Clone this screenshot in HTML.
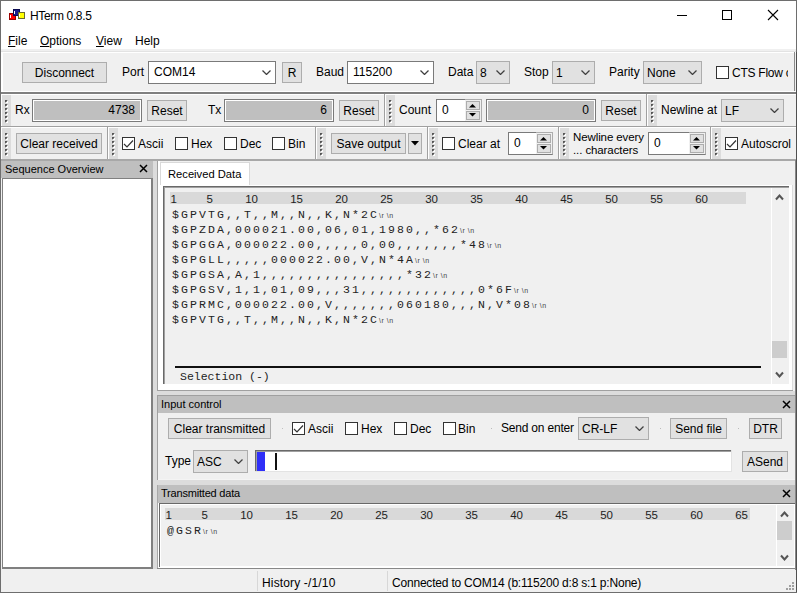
<!DOCTYPE html><html><head><meta charset="utf-8"><style>*{margin:0;padding:0;box-sizing:border-box}
html,body{width:797px;height:593px;overflow:hidden;background:#f0f0f0}
body{position:relative;font-family:"Liberation Sans",sans-serif;font-size:12px;color:#000}
.a{position:absolute}
.t{position:absolute;white-space:nowrap;line-height:14px}
.btn{position:absolute;background:#e1e1e1;border:1px solid #adadad;text-align:center;white-space:nowrap}
.cmb{position:absolute;background:#e1e1e1;border:1px solid #adadad;white-space:nowrap}
.ecmb{position:absolute;background:#fff;border:1px solid #7a7a7a;white-space:nowrap}
.fld{position:absolute;background:#bfbfbf;border:1px solid #7a7a7a;box-shadow:inset 0 0 0 1px #fff;text-align:right;white-space:nowrap}
.chk{position:absolute;width:13px;height:13px;border:1px solid #333;background:#fff}
.hdr{position:absolute;background:#bfbfbf}
.mono{position:absolute;white-space:pre;font-family:"Liberation Mono",monospace;font-size:11.5px;letter-spacing:2.1px;color:#222}
.rn{font-family:"Liberation Sans",sans-serif;font-size:7px;letter-spacing:0.5px;color:#444}
</style></head><body>
<div class="a" style="left:0px;top:0px;width:797px;height:593px;background:transparent;border:1px solid #6e6e6e"></div>
<div class="a" style="left:1px;top:1px;width:795px;height:49px;background:#fff;"></div>
<svg class="a" style="left:0px;top:0px" width="30" height="24" shape-rendering="crispEdges">
<rect x="9" y="13" width="7" height="7" fill="#9a0000"/><rect x="10" y="14" width="5" height="5" fill="#f00"/><rect x="10" y="15" width="1" height="3" fill="#fff"/>
<rect x="13" y="9" width="7" height="7" fill="#0a0a50"/><rect x="14" y="10" width="5" height="5" fill="#1c1c8a"/><rect x="14" y="11" width="1" height="3" fill="#fff"/>
<rect x="18" y="12" width="7" height="7" fill="#6a6a30"/><rect x="19" y="13" width="5" height="5" fill="#ff0"/><rect x="19" y="14" width="1" height="3" fill="#fff"/>
</svg>
<div class="t" style="left:30px;top:9px;letter-spacing:-0.35px">HTerm 0.8.5</div>
<div class="a" style="left:677px;top:15px;width:10px;height:1px;background:#000;"></div>
<div class="a" style="left:722px;top:10px;width:10px;height:10px;border:1px solid #000"></div>
<svg class="a" style="left:767px;top:9px" width="12" height="12" viewBox="0 0 12 12"><path d="M1 1L11 11M11 1L1 11" stroke="#000" stroke-width="1.1"/></svg>
<div class="t" style="left:8px;top:34px;"><u>F</u>ile</div>
<div class="t" style="left:40px;top:34px;"><u>O</u>ptions</div>
<div class="t" style="left:96px;top:34px;"><u>V</u>iew</div>
<div class="t" style="left:135px;top:34px;">Help</div>
<div class="a" style="left:1px;top:49px;width:795px;height:2px;background:#f0f0f0;"></div>
<div class="a" style="left:1px;top:51px;width:795px;height:1px;background:#e3e3e3;"></div>
<div class="a" style="left:1px;top:52px;width:795px;height:1px;background:#fff;"></div>
<div class="a" style="left:1px;top:52px;width:2px;height:39px;background:#fff;"></div>
<div class="btn" style="left:22px;top:62px;width:85px;height:21px;line-height:20px">Disconnect</div>
<div class="t" style="left:122px;top:65px;">Port</div>
<div class="ecmb" style="left:148px;top:61px;width:128px;height:23px;padding-left:5px;line-height:21px">COM14</div>
<svg class="a" style="left:262px;top:70px" width="9" height="5" viewBox="0 0 9 5"><path d="M0.5 0.5L4.5 4.5L8.5 0.5" stroke="#404040" stroke-width="1.25" fill="none"/></svg>
<div class="btn" style="left:282px;top:62px;width:20px;height:21px;line-height:20px">R</div>
<div class="t" style="left:316px;top:65px;">Baud</div>
<div class="ecmb" style="left:347px;top:61px;width:87px;height:23px;padding-left:5px;line-height:21px">115200</div>
<svg class="a" style="left:420px;top:70px" width="9" height="5" viewBox="0 0 9 5"><path d="M0.5 0.5L4.5 4.5L8.5 0.5" stroke="#404040" stroke-width="1.25" fill="none"/></svg>
<div class="t" style="left:448px;top:65px;">Data</div>
<div class="cmb" style="left:476px;top:61px;width:34px;height:23px;padding-left:3px;line-height:22px">8</div>
<svg class="a" style="left:496px;top:70px" width="9" height="5" viewBox="0 0 9 5"><path d="M0.5 0.5L4.5 4.5L8.5 0.5" stroke="#404040" stroke-width="1.25" fill="none"/></svg>
<div class="t" style="left:524px;top:65px;">Stop</div>
<div class="cmb" style="left:552px;top:61px;width:43px;height:23px;padding-left:3px;line-height:22px">1</div>
<svg class="a" style="left:581px;top:70px" width="9" height="5" viewBox="0 0 9 5"><path d="M0.5 0.5L4.5 4.5L8.5 0.5" stroke="#404040" stroke-width="1.25" fill="none"/></svg>
<div class="t" style="left:609px;top:65px;">Parity</div>
<div class="cmb" style="left:643px;top:61px;width:59px;height:23px;padding-left:3px;line-height:22px">None</div>
<svg class="a" style="left:688px;top:70px" width="9" height="5" viewBox="0 0 9 5"><path d="M0.5 0.5L4.5 4.5L8.5 0.5" stroke="#404040" stroke-width="1.25" fill="none"/></svg>
<div class="chk" style="left:716px;top:66px"></div>
<div class="a" style="left:732px;top:66px;width:56px;overflow:hidden;white-space:nowrap;line-height:14px;letter-spacing:-0.25px">CTS Flow c</div>
<div class="a" style="left:794px;top:52px;width:1px;height:40px;background:#8a8a8a;"></div>
<div class="a" style="left:1px;top:91px;width:795px;height:1px;background:#fff;"></div>
<div class="a" style="left:1px;top:92px;width:795px;height:2px;background:#808080;"></div>
<div class="a" style="left:1px;top:94px;width:795px;height:1px;background:#fff;"></div>
<div class="a" style="left:2px;top:95px;width:9px;height:31px;background:#dcdcdc"></div>
<svg class="a" style="left:0px;top:95px" width="12" height="31"><rect x="5" y="5" width="2" height="2" fill="#555"/><rect x="6" y="6" width="1" height="1" fill="#888"/><rect x="7" y="5" width="1" height="1" fill="#bbb"/><rect x="5" y="7" width="1" height="1" fill="#bbb"/><rect x="7" y="6" width="1" height="2" fill="#fff"/><rect x="6" y="7" width="1" height="1" fill="#fff"/><rect x="5" y="9" width="2" height="2" fill="#555"/><rect x="6" y="10" width="1" height="1" fill="#888"/><rect x="7" y="9" width="1" height="1" fill="#bbb"/><rect x="5" y="11" width="1" height="1" fill="#bbb"/><rect x="7" y="10" width="1" height="2" fill="#fff"/><rect x="6" y="11" width="1" height="1" fill="#fff"/><rect x="5" y="13" width="2" height="2" fill="#555"/><rect x="6" y="14" width="1" height="1" fill="#888"/><rect x="7" y="13" width="1" height="1" fill="#bbb"/><rect x="5" y="15" width="1" height="1" fill="#bbb"/><rect x="7" y="14" width="1" height="2" fill="#fff"/><rect x="6" y="15" width="1" height="1" fill="#fff"/><rect x="5" y="17" width="2" height="2" fill="#555"/><rect x="6" y="18" width="1" height="1" fill="#888"/><rect x="7" y="17" width="1" height="1" fill="#bbb"/><rect x="5" y="19" width="1" height="1" fill="#bbb"/><rect x="7" y="18" width="1" height="2" fill="#fff"/><rect x="6" y="19" width="1" height="1" fill="#fff"/><rect x="5" y="21" width="2" height="2" fill="#555"/><rect x="6" y="22" width="1" height="1" fill="#888"/><rect x="7" y="21" width="1" height="1" fill="#bbb"/><rect x="5" y="23" width="1" height="1" fill="#bbb"/><rect x="7" y="22" width="1" height="2" fill="#fff"/><rect x="6" y="23" width="1" height="1" fill="#fff"/><rect x="5" y="25" width="2" height="2" fill="#555"/><rect x="6" y="26" width="1" height="1" fill="#888"/><rect x="7" y="25" width="1" height="1" fill="#bbb"/><rect x="5" y="27" width="1" height="1" fill="#bbb"/><rect x="7" y="26" width="1" height="2" fill="#fff"/><rect x="6" y="27" width="1" height="1" fill="#fff"/></svg>
<div class="t" style="left:15px;top:103px;">Rx</div>
<div class="fld" style="left:32px;top:99px;width:110px;height:23px;padding-right:6px;line-height:21px">4738</div>
<div class="btn" style="left:147px;top:100px;width:40px;height:21px;line-height:20px">Reset</div>
<div class="t" style="left:208px;top:103px;">Tx</div>
<div class="fld" style="left:224px;top:99px;width:110px;height:23px;padding-right:6px;line-height:21px">6</div>
<div class="btn" style="left:339px;top:100px;width:40px;height:21px;line-height:20px">Reset</div>
<div class="a" style="left:384px;top:94px;width:1px;height:32px;background:#a0a0a0;"></div>
<div class="a" style="left:385px;top:94px;width:1px;height:32px;background:#fff;"></div>
<div class="a" style="left:386px;top:95px;width:9px;height:31px;background:#dcdcdc"></div>
<svg class="a" style="left:384px;top:95px" width="12" height="31"><rect x="5" y="5" width="2" height="2" fill="#555"/><rect x="6" y="6" width="1" height="1" fill="#888"/><rect x="7" y="5" width="1" height="1" fill="#bbb"/><rect x="5" y="7" width="1" height="1" fill="#bbb"/><rect x="7" y="6" width="1" height="2" fill="#fff"/><rect x="6" y="7" width="1" height="1" fill="#fff"/><rect x="5" y="9" width="2" height="2" fill="#555"/><rect x="6" y="10" width="1" height="1" fill="#888"/><rect x="7" y="9" width="1" height="1" fill="#bbb"/><rect x="5" y="11" width="1" height="1" fill="#bbb"/><rect x="7" y="10" width="1" height="2" fill="#fff"/><rect x="6" y="11" width="1" height="1" fill="#fff"/><rect x="5" y="13" width="2" height="2" fill="#555"/><rect x="6" y="14" width="1" height="1" fill="#888"/><rect x="7" y="13" width="1" height="1" fill="#bbb"/><rect x="5" y="15" width="1" height="1" fill="#bbb"/><rect x="7" y="14" width="1" height="2" fill="#fff"/><rect x="6" y="15" width="1" height="1" fill="#fff"/><rect x="5" y="17" width="2" height="2" fill="#555"/><rect x="6" y="18" width="1" height="1" fill="#888"/><rect x="7" y="17" width="1" height="1" fill="#bbb"/><rect x="5" y="19" width="1" height="1" fill="#bbb"/><rect x="7" y="18" width="1" height="2" fill="#fff"/><rect x="6" y="19" width="1" height="1" fill="#fff"/><rect x="5" y="21" width="2" height="2" fill="#555"/><rect x="6" y="22" width="1" height="1" fill="#888"/><rect x="7" y="21" width="1" height="1" fill="#bbb"/><rect x="5" y="23" width="1" height="1" fill="#bbb"/><rect x="7" y="22" width="1" height="2" fill="#fff"/><rect x="6" y="23" width="1" height="1" fill="#fff"/><rect x="5" y="25" width="2" height="2" fill="#555"/><rect x="6" y="26" width="1" height="1" fill="#888"/><rect x="7" y="25" width="1" height="1" fill="#bbb"/><rect x="5" y="27" width="1" height="1" fill="#bbb"/><rect x="7" y="26" width="1" height="2" fill="#fff"/><rect x="6" y="27" width="1" height="1" fill="#fff"/></svg>
<div class="t" style="left:399px;top:103px;">Count</div>
<div class="a" style="left:436px;top:99px;width:46px;height:23px;background:#fff;border:1px solid #7a7a7a;border-right-color:#adadad"></div>
<div class="t" style="left:442px;top:103px;">0</div>
<div class="a" style="left:465px;top:100px;width:16px;height:21px;background:#f0f0f0;"></div>
<div class="a" style="left:465px;top:99px;width:17px;height:1px;background:#adadad;"></div>
<div class="a" style="left:466px;top:101px;width:14px;height:9px;background:#e1e1e1;border:1px solid #adadad"></div>
<div class="a" style="left:466px;top:111px;width:14px;height:9px;background:#e1e1e1;border:1px solid #adadad"></div>
<svg class="a" style="left:469px;top:104px" width="7" height="4"><path d="M0 3.5L3.5 0L7 3.5Z" fill="#000"/></svg>
<svg class="a" style="left:469px;top:113px" width="7" height="4"><path d="M0 0L3.5 3.5L7 0Z" fill="#000"/></svg>
<div class="fld" style="left:486px;top:99px;width:110px;height:23px;padding-right:6px;line-height:21px">0</div>
<div class="btn" style="left:601px;top:100px;width:40px;height:21px;line-height:20px">Reset</div>
<div class="a" style="left:646px;top:94px;width:1px;height:32px;background:#a0a0a0;"></div>
<div class="a" style="left:647px;top:94px;width:1px;height:32px;background:#fff;"></div>
<div class="a" style="left:648px;top:95px;width:9px;height:31px;background:#dcdcdc"></div>
<svg class="a" style="left:646px;top:95px" width="12" height="31"><rect x="5" y="5" width="2" height="2" fill="#555"/><rect x="6" y="6" width="1" height="1" fill="#888"/><rect x="7" y="5" width="1" height="1" fill="#bbb"/><rect x="5" y="7" width="1" height="1" fill="#bbb"/><rect x="7" y="6" width="1" height="2" fill="#fff"/><rect x="6" y="7" width="1" height="1" fill="#fff"/><rect x="5" y="9" width="2" height="2" fill="#555"/><rect x="6" y="10" width="1" height="1" fill="#888"/><rect x="7" y="9" width="1" height="1" fill="#bbb"/><rect x="5" y="11" width="1" height="1" fill="#bbb"/><rect x="7" y="10" width="1" height="2" fill="#fff"/><rect x="6" y="11" width="1" height="1" fill="#fff"/><rect x="5" y="13" width="2" height="2" fill="#555"/><rect x="6" y="14" width="1" height="1" fill="#888"/><rect x="7" y="13" width="1" height="1" fill="#bbb"/><rect x="5" y="15" width="1" height="1" fill="#bbb"/><rect x="7" y="14" width="1" height="2" fill="#fff"/><rect x="6" y="15" width="1" height="1" fill="#fff"/><rect x="5" y="17" width="2" height="2" fill="#555"/><rect x="6" y="18" width="1" height="1" fill="#888"/><rect x="7" y="17" width="1" height="1" fill="#bbb"/><rect x="5" y="19" width="1" height="1" fill="#bbb"/><rect x="7" y="18" width="1" height="2" fill="#fff"/><rect x="6" y="19" width="1" height="1" fill="#fff"/><rect x="5" y="21" width="2" height="2" fill="#555"/><rect x="6" y="22" width="1" height="1" fill="#888"/><rect x="7" y="21" width="1" height="1" fill="#bbb"/><rect x="5" y="23" width="1" height="1" fill="#bbb"/><rect x="7" y="22" width="1" height="2" fill="#fff"/><rect x="6" y="23" width="1" height="1" fill="#fff"/><rect x="5" y="25" width="2" height="2" fill="#555"/><rect x="6" y="26" width="1" height="1" fill="#888"/><rect x="7" y="25" width="1" height="1" fill="#bbb"/><rect x="5" y="27" width="1" height="1" fill="#bbb"/><rect x="7" y="26" width="1" height="2" fill="#fff"/><rect x="6" y="27" width="1" height="1" fill="#fff"/></svg>
<div class="t" style="left:661px;top:103px;">Newline at</div>
<div class="cmb" style="left:721px;top:99px;width:63px;height:23px;padding-left:3px;line-height:22px">LF</div>
<svg class="a" style="left:770px;top:108px" width="9" height="5" viewBox="0 0 9 5"><path d="M0.5 0.5L4.5 4.5L8.5 0.5" stroke="#404040" stroke-width="1.25" fill="none"/></svg>
<div class="a" style="left:1px;top:126px;width:795px;height:1px;background:#a0a0a0;"></div>
<div class="a" style="left:1px;top:127px;width:795px;height:1px;background:#fff;"></div>
<div class="a" style="left:1px;top:95px;width:1px;height:31px;background:#fff;"></div>
<div class="a" style="left:1px;top:128px;width:1px;height:31px;background:#fff;"></div>
<div class="a" style="left:2px;top:128px;width:9px;height:31px;background:#dcdcdc"></div>
<svg class="a" style="left:0px;top:128px" width="12" height="31"><rect x="5" y="5" width="2" height="2" fill="#555"/><rect x="6" y="6" width="1" height="1" fill="#888"/><rect x="7" y="5" width="1" height="1" fill="#bbb"/><rect x="5" y="7" width="1" height="1" fill="#bbb"/><rect x="7" y="6" width="1" height="2" fill="#fff"/><rect x="6" y="7" width="1" height="1" fill="#fff"/><rect x="5" y="9" width="2" height="2" fill="#555"/><rect x="6" y="10" width="1" height="1" fill="#888"/><rect x="7" y="9" width="1" height="1" fill="#bbb"/><rect x="5" y="11" width="1" height="1" fill="#bbb"/><rect x="7" y="10" width="1" height="2" fill="#fff"/><rect x="6" y="11" width="1" height="1" fill="#fff"/><rect x="5" y="13" width="2" height="2" fill="#555"/><rect x="6" y="14" width="1" height="1" fill="#888"/><rect x="7" y="13" width="1" height="1" fill="#bbb"/><rect x="5" y="15" width="1" height="1" fill="#bbb"/><rect x="7" y="14" width="1" height="2" fill="#fff"/><rect x="6" y="15" width="1" height="1" fill="#fff"/><rect x="5" y="17" width="2" height="2" fill="#555"/><rect x="6" y="18" width="1" height="1" fill="#888"/><rect x="7" y="17" width="1" height="1" fill="#bbb"/><rect x="5" y="19" width="1" height="1" fill="#bbb"/><rect x="7" y="18" width="1" height="2" fill="#fff"/><rect x="6" y="19" width="1" height="1" fill="#fff"/><rect x="5" y="21" width="2" height="2" fill="#555"/><rect x="6" y="22" width="1" height="1" fill="#888"/><rect x="7" y="21" width="1" height="1" fill="#bbb"/><rect x="5" y="23" width="1" height="1" fill="#bbb"/><rect x="7" y="22" width="1" height="2" fill="#fff"/><rect x="6" y="23" width="1" height="1" fill="#fff"/><rect x="5" y="25" width="2" height="2" fill="#555"/><rect x="6" y="26" width="1" height="1" fill="#888"/><rect x="7" y="25" width="1" height="1" fill="#bbb"/><rect x="5" y="27" width="1" height="1" fill="#bbb"/><rect x="7" y="26" width="1" height="2" fill="#fff"/><rect x="6" y="27" width="1" height="1" fill="#fff"/></svg>
<div class="btn" style="left:16px;top:133px;width:86px;height:21px;line-height:20px">Clear received</div>
<div class="a" style="left:107px;top:127px;width:1px;height:32px;background:#a0a0a0;"></div>
<div class="a" style="left:108px;top:127px;width:1px;height:32px;background:#fff;"></div>
<div class="a" style="left:109px;top:128px;width:9px;height:31px;background:#dcdcdc"></div>
<svg class="a" style="left:107px;top:128px" width="12" height="31"><rect x="5" y="5" width="2" height="2" fill="#555"/><rect x="6" y="6" width="1" height="1" fill="#888"/><rect x="7" y="5" width="1" height="1" fill="#bbb"/><rect x="5" y="7" width="1" height="1" fill="#bbb"/><rect x="7" y="6" width="1" height="2" fill="#fff"/><rect x="6" y="7" width="1" height="1" fill="#fff"/><rect x="5" y="9" width="2" height="2" fill="#555"/><rect x="6" y="10" width="1" height="1" fill="#888"/><rect x="7" y="9" width="1" height="1" fill="#bbb"/><rect x="5" y="11" width="1" height="1" fill="#bbb"/><rect x="7" y="10" width="1" height="2" fill="#fff"/><rect x="6" y="11" width="1" height="1" fill="#fff"/><rect x="5" y="13" width="2" height="2" fill="#555"/><rect x="6" y="14" width="1" height="1" fill="#888"/><rect x="7" y="13" width="1" height="1" fill="#bbb"/><rect x="5" y="15" width="1" height="1" fill="#bbb"/><rect x="7" y="14" width="1" height="2" fill="#fff"/><rect x="6" y="15" width="1" height="1" fill="#fff"/><rect x="5" y="17" width="2" height="2" fill="#555"/><rect x="6" y="18" width="1" height="1" fill="#888"/><rect x="7" y="17" width="1" height="1" fill="#bbb"/><rect x="5" y="19" width="1" height="1" fill="#bbb"/><rect x="7" y="18" width="1" height="2" fill="#fff"/><rect x="6" y="19" width="1" height="1" fill="#fff"/><rect x="5" y="21" width="2" height="2" fill="#555"/><rect x="6" y="22" width="1" height="1" fill="#888"/><rect x="7" y="21" width="1" height="1" fill="#bbb"/><rect x="5" y="23" width="1" height="1" fill="#bbb"/><rect x="7" y="22" width="1" height="2" fill="#fff"/><rect x="6" y="23" width="1" height="1" fill="#fff"/><rect x="5" y="25" width="2" height="2" fill="#555"/><rect x="6" y="26" width="1" height="1" fill="#888"/><rect x="7" y="25" width="1" height="1" fill="#bbb"/><rect x="5" y="27" width="1" height="1" fill="#bbb"/><rect x="7" y="26" width="1" height="2" fill="#fff"/><rect x="6" y="27" width="1" height="1" fill="#fff"/></svg>
<div class="chk" style="left:122px;top:137px"></div>
<svg class="a" style="left:122px;top:137px" width="13" height="13" viewBox="0 0 13 13"><path d="M2 7L5 10L11 3.5" stroke="#333" stroke-width="1.2" fill="none"/></svg>
<div class="t" style="left:138px;top:137px;">Ascii</div>
<div class="chk" style="left:175px;top:137px"></div>
<div class="t" style="left:191px;top:137px;">Hex</div>
<div class="chk" style="left:224px;top:137px"></div>
<div class="t" style="left:240px;top:137px;">Dec</div>
<div class="chk" style="left:272px;top:137px"></div>
<div class="t" style="left:288px;top:137px;">Bin</div>
<div class="a" style="left:315px;top:127px;width:1px;height:32px;background:#a0a0a0;"></div>
<div class="a" style="left:316px;top:127px;width:1px;height:32px;background:#fff;"></div>
<div class="a" style="left:317px;top:128px;width:9px;height:31px;background:#dcdcdc"></div>
<svg class="a" style="left:315px;top:128px" width="12" height="31"><rect x="5" y="5" width="2" height="2" fill="#555"/><rect x="6" y="6" width="1" height="1" fill="#888"/><rect x="7" y="5" width="1" height="1" fill="#bbb"/><rect x="5" y="7" width="1" height="1" fill="#bbb"/><rect x="7" y="6" width="1" height="2" fill="#fff"/><rect x="6" y="7" width="1" height="1" fill="#fff"/><rect x="5" y="9" width="2" height="2" fill="#555"/><rect x="6" y="10" width="1" height="1" fill="#888"/><rect x="7" y="9" width="1" height="1" fill="#bbb"/><rect x="5" y="11" width="1" height="1" fill="#bbb"/><rect x="7" y="10" width="1" height="2" fill="#fff"/><rect x="6" y="11" width="1" height="1" fill="#fff"/><rect x="5" y="13" width="2" height="2" fill="#555"/><rect x="6" y="14" width="1" height="1" fill="#888"/><rect x="7" y="13" width="1" height="1" fill="#bbb"/><rect x="5" y="15" width="1" height="1" fill="#bbb"/><rect x="7" y="14" width="1" height="2" fill="#fff"/><rect x="6" y="15" width="1" height="1" fill="#fff"/><rect x="5" y="17" width="2" height="2" fill="#555"/><rect x="6" y="18" width="1" height="1" fill="#888"/><rect x="7" y="17" width="1" height="1" fill="#bbb"/><rect x="5" y="19" width="1" height="1" fill="#bbb"/><rect x="7" y="18" width="1" height="2" fill="#fff"/><rect x="6" y="19" width="1" height="1" fill="#fff"/><rect x="5" y="21" width="2" height="2" fill="#555"/><rect x="6" y="22" width="1" height="1" fill="#888"/><rect x="7" y="21" width="1" height="1" fill="#bbb"/><rect x="5" y="23" width="1" height="1" fill="#bbb"/><rect x="7" y="22" width="1" height="2" fill="#fff"/><rect x="6" y="23" width="1" height="1" fill="#fff"/><rect x="5" y="25" width="2" height="2" fill="#555"/><rect x="6" y="26" width="1" height="1" fill="#888"/><rect x="7" y="25" width="1" height="1" fill="#bbb"/><rect x="5" y="27" width="1" height="1" fill="#bbb"/><rect x="7" y="26" width="1" height="2" fill="#fff"/><rect x="6" y="27" width="1" height="1" fill="#fff"/></svg>
<div class="btn" style="left:331px;top:133px;width:75px;height:21px;line-height:20px">Save output</div>
<div class="btn" style="left:408px;top:133px;width:14px;height:21px;line-height:20px"></div>
<svg class="a" style="left:411px;top:141px" width="8" height="5"><path d="M0 0L8 0L4 4.5Z" fill="#000"/></svg>
<div class="a" style="left:427px;top:127px;width:1px;height:32px;background:#a0a0a0;"></div>
<div class="a" style="left:428px;top:127px;width:1px;height:32px;background:#fff;"></div>
<div class="a" style="left:429px;top:128px;width:9px;height:31px;background:#dcdcdc"></div>
<svg class="a" style="left:427px;top:128px" width="12" height="31"><rect x="5" y="5" width="2" height="2" fill="#555"/><rect x="6" y="6" width="1" height="1" fill="#888"/><rect x="7" y="5" width="1" height="1" fill="#bbb"/><rect x="5" y="7" width="1" height="1" fill="#bbb"/><rect x="7" y="6" width="1" height="2" fill="#fff"/><rect x="6" y="7" width="1" height="1" fill="#fff"/><rect x="5" y="9" width="2" height="2" fill="#555"/><rect x="6" y="10" width="1" height="1" fill="#888"/><rect x="7" y="9" width="1" height="1" fill="#bbb"/><rect x="5" y="11" width="1" height="1" fill="#bbb"/><rect x="7" y="10" width="1" height="2" fill="#fff"/><rect x="6" y="11" width="1" height="1" fill="#fff"/><rect x="5" y="13" width="2" height="2" fill="#555"/><rect x="6" y="14" width="1" height="1" fill="#888"/><rect x="7" y="13" width="1" height="1" fill="#bbb"/><rect x="5" y="15" width="1" height="1" fill="#bbb"/><rect x="7" y="14" width="1" height="2" fill="#fff"/><rect x="6" y="15" width="1" height="1" fill="#fff"/><rect x="5" y="17" width="2" height="2" fill="#555"/><rect x="6" y="18" width="1" height="1" fill="#888"/><rect x="7" y="17" width="1" height="1" fill="#bbb"/><rect x="5" y="19" width="1" height="1" fill="#bbb"/><rect x="7" y="18" width="1" height="2" fill="#fff"/><rect x="6" y="19" width="1" height="1" fill="#fff"/><rect x="5" y="21" width="2" height="2" fill="#555"/><rect x="6" y="22" width="1" height="1" fill="#888"/><rect x="7" y="21" width="1" height="1" fill="#bbb"/><rect x="5" y="23" width="1" height="1" fill="#bbb"/><rect x="7" y="22" width="1" height="2" fill="#fff"/><rect x="6" y="23" width="1" height="1" fill="#fff"/><rect x="5" y="25" width="2" height="2" fill="#555"/><rect x="6" y="26" width="1" height="1" fill="#888"/><rect x="7" y="25" width="1" height="1" fill="#bbb"/><rect x="5" y="27" width="1" height="1" fill="#bbb"/><rect x="7" y="26" width="1" height="2" fill="#fff"/><rect x="6" y="27" width="1" height="1" fill="#fff"/></svg>
<div class="chk" style="left:442px;top:137px"></div>
<div class="t" style="left:458px;top:137px;">Clear at</div>
<div class="a" style="left:508px;top:132px;width:45px;height:23px;background:#fff;border:1px solid #7a7a7a;border-right-color:#adadad"></div>
<div class="t" style="left:514px;top:136px;">0</div>
<div class="a" style="left:536px;top:133px;width:16px;height:21px;background:#f0f0f0;"></div>
<div class="a" style="left:536px;top:132px;width:17px;height:1px;background:#adadad;"></div>
<div class="a" style="left:537px;top:134px;width:14px;height:9px;background:#e1e1e1;border:1px solid #adadad"></div>
<div class="a" style="left:537px;top:144px;width:14px;height:9px;background:#e1e1e1;border:1px solid #adadad"></div>
<svg class="a" style="left:540px;top:137px" width="7" height="4"><path d="M0 3.5L3.5 0L7 3.5Z" fill="#000"/></svg>
<svg class="a" style="left:540px;top:146px" width="7" height="4"><path d="M0 0L3.5 3.5L7 0Z" fill="#000"/></svg>
<div class="a" style="left:558px;top:127px;width:1px;height:32px;background:#a0a0a0;"></div>
<div class="a" style="left:559px;top:127px;width:1px;height:32px;background:#fff;"></div>
<div class="a" style="left:560px;top:128px;width:9px;height:31px;background:#dcdcdc"></div>
<svg class="a" style="left:558px;top:128px" width="12" height="31"><rect x="5" y="5" width="2" height="2" fill="#555"/><rect x="6" y="6" width="1" height="1" fill="#888"/><rect x="7" y="5" width="1" height="1" fill="#bbb"/><rect x="5" y="7" width="1" height="1" fill="#bbb"/><rect x="7" y="6" width="1" height="2" fill="#fff"/><rect x="6" y="7" width="1" height="1" fill="#fff"/><rect x="5" y="9" width="2" height="2" fill="#555"/><rect x="6" y="10" width="1" height="1" fill="#888"/><rect x="7" y="9" width="1" height="1" fill="#bbb"/><rect x="5" y="11" width="1" height="1" fill="#bbb"/><rect x="7" y="10" width="1" height="2" fill="#fff"/><rect x="6" y="11" width="1" height="1" fill="#fff"/><rect x="5" y="13" width="2" height="2" fill="#555"/><rect x="6" y="14" width="1" height="1" fill="#888"/><rect x="7" y="13" width="1" height="1" fill="#bbb"/><rect x="5" y="15" width="1" height="1" fill="#bbb"/><rect x="7" y="14" width="1" height="2" fill="#fff"/><rect x="6" y="15" width="1" height="1" fill="#fff"/><rect x="5" y="17" width="2" height="2" fill="#555"/><rect x="6" y="18" width="1" height="1" fill="#888"/><rect x="7" y="17" width="1" height="1" fill="#bbb"/><rect x="5" y="19" width="1" height="1" fill="#bbb"/><rect x="7" y="18" width="1" height="2" fill="#fff"/><rect x="6" y="19" width="1" height="1" fill="#fff"/><rect x="5" y="21" width="2" height="2" fill="#555"/><rect x="6" y="22" width="1" height="1" fill="#888"/><rect x="7" y="21" width="1" height="1" fill="#bbb"/><rect x="5" y="23" width="1" height="1" fill="#bbb"/><rect x="7" y="22" width="1" height="2" fill="#fff"/><rect x="6" y="23" width="1" height="1" fill="#fff"/><rect x="5" y="25" width="2" height="2" fill="#555"/><rect x="6" y="26" width="1" height="1" fill="#888"/><rect x="7" y="25" width="1" height="1" fill="#bbb"/><rect x="5" y="27" width="1" height="1" fill="#bbb"/><rect x="7" y="26" width="1" height="2" fill="#fff"/><rect x="6" y="27" width="1" height="1" fill="#fff"/></svg>
<div class="t" style="left:573px;top:131px;line-height:13px;font-size:11.5px;letter-spacing:-0.1px">Newline every<br>... characters</div>
<div class="a" style="left:648px;top:132px;width:58px;height:23px;background:#fff;border:1px solid #7a7a7a;border-right-color:#adadad"></div>
<div class="t" style="left:654px;top:136px;">0</div>
<div class="a" style="left:689px;top:133px;width:16px;height:21px;background:#f0f0f0;"></div>
<div class="a" style="left:689px;top:132px;width:17px;height:1px;background:#adadad;"></div>
<div class="a" style="left:690px;top:134px;width:14px;height:9px;background:#e1e1e1;border:1px solid #adadad"></div>
<div class="a" style="left:690px;top:144px;width:14px;height:9px;background:#e1e1e1;border:1px solid #adadad"></div>
<svg class="a" style="left:693px;top:137px" width="7" height="4"><path d="M0 3.5L3.5 0L7 3.5Z" fill="#000"/></svg>
<svg class="a" style="left:693px;top:146px" width="7" height="4"><path d="M0 0L3.5 3.5L7 0Z" fill="#000"/></svg>
<div class="a" style="left:710px;top:127px;width:1px;height:32px;background:#a0a0a0;"></div>
<div class="a" style="left:711px;top:127px;width:1px;height:32px;background:#fff;"></div>
<div class="a" style="left:712px;top:128px;width:9px;height:31px;background:#dcdcdc"></div>
<svg class="a" style="left:710px;top:128px" width="12" height="31"><rect x="5" y="5" width="2" height="2" fill="#555"/><rect x="6" y="6" width="1" height="1" fill="#888"/><rect x="7" y="5" width="1" height="1" fill="#bbb"/><rect x="5" y="7" width="1" height="1" fill="#bbb"/><rect x="7" y="6" width="1" height="2" fill="#fff"/><rect x="6" y="7" width="1" height="1" fill="#fff"/><rect x="5" y="9" width="2" height="2" fill="#555"/><rect x="6" y="10" width="1" height="1" fill="#888"/><rect x="7" y="9" width="1" height="1" fill="#bbb"/><rect x="5" y="11" width="1" height="1" fill="#bbb"/><rect x="7" y="10" width="1" height="2" fill="#fff"/><rect x="6" y="11" width="1" height="1" fill="#fff"/><rect x="5" y="13" width="2" height="2" fill="#555"/><rect x="6" y="14" width="1" height="1" fill="#888"/><rect x="7" y="13" width="1" height="1" fill="#bbb"/><rect x="5" y="15" width="1" height="1" fill="#bbb"/><rect x="7" y="14" width="1" height="2" fill="#fff"/><rect x="6" y="15" width="1" height="1" fill="#fff"/><rect x="5" y="17" width="2" height="2" fill="#555"/><rect x="6" y="18" width="1" height="1" fill="#888"/><rect x="7" y="17" width="1" height="1" fill="#bbb"/><rect x="5" y="19" width="1" height="1" fill="#bbb"/><rect x="7" y="18" width="1" height="2" fill="#fff"/><rect x="6" y="19" width="1" height="1" fill="#fff"/><rect x="5" y="21" width="2" height="2" fill="#555"/><rect x="6" y="22" width="1" height="1" fill="#888"/><rect x="7" y="21" width="1" height="1" fill="#bbb"/><rect x="5" y="23" width="1" height="1" fill="#bbb"/><rect x="7" y="22" width="1" height="2" fill="#fff"/><rect x="6" y="23" width="1" height="1" fill="#fff"/><rect x="5" y="25" width="2" height="2" fill="#555"/><rect x="6" y="26" width="1" height="1" fill="#888"/><rect x="7" y="25" width="1" height="1" fill="#bbb"/><rect x="5" y="27" width="1" height="1" fill="#bbb"/><rect x="7" y="26" width="1" height="2" fill="#fff"/><rect x="6" y="27" width="1" height="1" fill="#fff"/></svg>
<div class="chk" style="left:725px;top:137px"></div>
<svg class="a" style="left:725px;top:137px" width="13" height="13" viewBox="0 0 13 13"><path d="M2 7L5 10L11 3.5" stroke="#333" stroke-width="1.2" fill="none"/></svg>
<div class="a" style="left:741px;top:137px;width:50px;overflow:hidden;white-space:nowrap;line-height:14px">Autoscroll</div>
<div class="a" style="left:1px;top:159px;width:795px;height:2px;background:#a8a8a8;"></div>
<div class="a" style="left:1px;top:161px;width:152px;height:17px;background:#bfbfbf;"></div>
<div class="t" style="left:5px;top:162px;font-size:11px">Sequence Overview</div>
<svg class="a" style="left:139px;top:164px" width="9" height="9" viewBox="0 0 9 9"><path d="M1 1L8 8M8 1L1 8" stroke="#000" stroke-width="1.5"/></svg>
<div class="a" style="left:2px;top:178px;width:151px;height:391px;background:#808080;"></div>
<div class="a" style="left:3px;top:179px;width:148px;height:388px;background:#fff;"></div>
<div class="a" style="left:153px;top:161px;width:5px;height:408px;background:#dcdcdc;"></div>
<div class="a" style="left:158px;top:161px;width:637px;height:24px;background:#f0f0f0;"></div>
<div class="a" style="left:157px;top:161px;width:1px;height:24px;background:#a0a0a0;"></div>
<div class="a" style="left:158px;top:161px;width:2px;height:24px;background:#fff;"></div>
<div class="a" style="left:160px;top:162px;width:90px;height:24px;background:#fff;border:1px solid #d9d9d9;border-bottom:none"></div>
<div class="t" style="left:168px;top:167px;font-size:11.2px">Received Data</div>
<div class="a" style="left:157px;top:185px;width:636px;height:206px;background:#a0a0a0;"></div>
<div class="a" style="left:792px;top:185px;width:1px;height:205px;background:#dcdcdc;"></div>
<div class="a" style="left:158px;top:185px;width:634px;height:205px;background:#fff;"></div>
<div class="a" style="left:160px;top:185px;width:90px;height:1px;background:#fff;"></div>
<div class="a" style="left:163px;top:186px;width:626px;height:198px;background:#696969;"></div>
<div class="a" style="left:164px;top:187px;width:625px;height:197px;background:#a0a0a0;"></div>
<div class="a" style="left:165px;top:188px;width:624px;height:196px;background:#f0f0f0;"></div>
<div class="a" style="left:170px;top:192px;width:576px;height:12px;background:#d9d9d9;"></div>
<div class="t" style="left:137px;width:40px;text-align:right;top:192px;font-size:11.5px;color:#222">1</div>
<div class="t" style="left:173px;width:40px;text-align:right;top:192px;font-size:11.5px;color:#222">5</div>
<div class="t" style="left:218px;width:40px;text-align:right;top:192px;font-size:11.5px;color:#222">10</div>
<div class="t" style="left:263px;width:40px;text-align:right;top:192px;font-size:11.5px;color:#222">15</div>
<div class="t" style="left:308px;width:40px;text-align:right;top:192px;font-size:11.5px;color:#222">20</div>
<div class="t" style="left:353px;width:40px;text-align:right;top:192px;font-size:11.5px;color:#222">25</div>
<div class="t" style="left:398px;width:40px;text-align:right;top:192px;font-size:11.5px;color:#222">30</div>
<div class="t" style="left:443px;width:40px;text-align:right;top:192px;font-size:11.5px;color:#222">35</div>
<div class="t" style="left:488px;width:40px;text-align:right;top:192px;font-size:11.5px;color:#222">40</div>
<div class="t" style="left:533px;width:40px;text-align:right;top:192px;font-size:11.5px;color:#222">45</div>
<div class="t" style="left:578px;width:40px;text-align:right;top:192px;font-size:11.5px;color:#222">50</div>
<div class="t" style="left:623px;width:40px;text-align:right;top:192px;font-size:11.5px;color:#222">55</div>
<div class="t" style="left:668px;width:40px;text-align:right;top:192px;font-size:11.5px;color:#222">60</div>
<div class="mono" style="left:172px;top:207px;line-height:15px">$GPVTG,,T,,M,,N,,K,N*2C<span class="rn">\r \n</span></div>
<div class="mono" style="left:172px;top:222px;line-height:15px">$GPZDA,000021.00,06,01,1980,,*62<span class="rn">\r \n</span></div>
<div class="mono" style="left:172px;top:237px;line-height:15px">$GPGGA,000022.00,,,,,0,00,,,,,,,*48<span class="rn">\r \n</span></div>
<div class="mono" style="left:172px;top:252px;line-height:15px">$GPGLL,,,,,000022.00,V,N*4A<span class="rn">\r \n</span></div>
<div class="mono" style="left:172px;top:267px;line-height:15px">$GPGSA,A,1,,,,,,,,,,,,,,,,*32<span class="rn">\r \n</span></div>
<div class="mono" style="left:172px;top:282px;line-height:15px">$GPGSV,1,1,01,09,,,31,,,,,,,,,,,,,0*6F<span class="rn">\r \n</span></div>
<div class="mono" style="left:172px;top:297px;line-height:15px">$GPRMC,000022.00,V,,,,,,,060180,,,N,V*08<span class="rn">\r \n</span></div>
<div class="mono" style="left:172px;top:312px;line-height:15px">$GPVTG,,T,,M,,N,,K,N*2C<span class="rn">\r \n</span></div>
<div class="a" style="left:175px;top:366px;width:586px;height:2px;background:#111;"></div>
<div class="mono" style="left:180px;top:370px;line-height:14px;letter-spacing:0px">Selection (-)</div>
<div class="a" style="left:771px;top:188px;width:1px;height:196px;background:#fff;"></div>
<svg class="a" style="left:775px;top:193px" width="9" height="8" viewBox="0 0 9 8"><path d="M1 6.5L4.5 2.5L8 6.5" stroke="#555" stroke-width="2" fill="none"/></svg>
<div class="a" style="left:772px;top:341px;width:15px;height:17px;background:#cdcdcd;"></div>
<svg class="a" style="left:775px;top:371px" width="9" height="8" viewBox="0 0 9 8"><path d="M1 1.5L4.5 5.5L8 1.5" stroke="#555" stroke-width="2" fill="none"/></svg>
<div class="a" style="left:157px;top:391px;width:638px;height:4px;background:#dcdcdc;"></div>
<div class="a" style="left:157px;top:395px;width:638px;height:85px;background:#a0a0a0;"></div>
<div class="a" style="left:158px;top:479px;width:637px;height:1px;background:#f4f4f4;"></div>
<div class="a" style="left:158px;top:396px;width:637px;height:83px;background:#f0f0f0;"></div>
<div class="a" style="left:158px;top:396px;width:637px;height:17px;background:#bfbfbf;"></div>
<div class="t" style="left:161px;top:397px;font-size:11px">Input control</div>
<svg class="a" style="left:782px;top:400px" width="9" height="9" viewBox="0 0 9 9"><path d="M1 1L8 8M8 1L1 8" stroke="#000" stroke-width="1.5"/></svg>
<div class="btn" style="left:168px;top:418px;width:103px;height:21px;line-height:20px">Clear transmitted</div>
<div class="a" style="left:282px;top:428px;width:1px;height:1px;background:#c0c0c0;"></div>
<div class="chk" style="left:292px;top:422px"></div>
<svg class="a" style="left:292px;top:422px" width="13" height="13" viewBox="0 0 13 13"><path d="M2 7L5 10L11 3.5" stroke="#333" stroke-width="1.2" fill="none"/></svg>
<div class="t" style="left:308px;top:422px;">Ascii</div>
<div class="chk" style="left:345px;top:422px"></div>
<div class="t" style="left:361px;top:422px;">Hex</div>
<div class="chk" style="left:394px;top:422px"></div>
<div class="t" style="left:410px;top:422px;">Dec</div>
<div class="chk" style="left:443px;top:422px"></div>
<div class="t" style="left:458px;top:422px;">Bin</div>
<div class="a" style="left:491px;top:428px;width:1px;height:1px;background:#bbb;"></div>
<div class="t" style="left:501px;top:421px;letter-spacing:-0.2px">Send on enter</div>
<div class="cmb" style="left:578px;top:417px;width:71px;height:23px;padding-left:3px;line-height:22px">CR-LF</div>
<svg class="a" style="left:635px;top:426px" width="9" height="5" viewBox="0 0 9 5"><path d="M0.5 0.5L4.5 4.5L8.5 0.5" stroke="#404040" stroke-width="1.25" fill="none"/></svg>
<div class="a" style="left:660px;top:428px;width:1px;height:1px;background:#bbb;"></div>
<div class="btn" style="left:670px;top:418px;width:57px;height:21px;line-height:20px">Send file</div>
<div class="a" style="left:738px;top:428px;width:1px;height:1px;background:#bbb;"></div>
<div class="btn" style="left:749px;top:418px;width:33px;height:21px;line-height:20px">DTR</div>
<div class="t" style="left:165px;top:454px;">Type</div>
<div class="cmb" style="left:193px;top:450px;width:55px;height:23px;padding-left:3px;line-height:22px">ASC</div>
<svg class="a" style="left:234px;top:459px" width="9" height="5" viewBox="0 0 9 5"><path d="M0.5 0.5L4.5 4.5L8.5 0.5" stroke="#404040" stroke-width="1.25" fill="none"/></svg>
<div class="a" style="left:255px;top:450px;width:477px;height:22px;background:#e3e3e3;"></div>
<div class="a" style="left:255px;top:450px;width:476px;height:21px;background:#696969;"></div>
<div class="a" style="left:256px;top:451px;width:475px;height:20px;background:#a0a0a0;"></div>
<div class="a" style="left:257px;top:452px;width:474px;height:19px;background:#fff;"></div>
<div class="a" style="left:257px;top:452px;width:8px;height:19px;background:#2f2ff8;"></div>
<div class="a" style="left:275px;top:453px;width:2px;height:17px;background:#111;"></div>
<div class="btn" style="left:742px;top:451px;width:46px;height:21px;line-height:20px">ASend</div>
<div class="a" style="left:157px;top:480px;width:638px;height:5px;background:#dcdcdc;"></div>
<div class="a" style="left:157px;top:485px;width:638px;height:84px;background:#a8a8a8;"></div>
<div class="a" style="left:157px;top:568px;width:638px;height:1px;background:#888;"></div>
<div class="a" style="left:158px;top:485px;width:637px;height:18px;background:#bfbfbf;"></div>
<div class="t" style="left:161px;top:486px;font-size:11px;letter-spacing:-0.2px">Transmitted data</div>
<svg class="a" style="left:782px;top:489px" width="9" height="9" viewBox="0 0 9 9"><path d="M1 1L8 8M8 1L1 8" stroke="#000" stroke-width="1.5"/></svg>
<div class="a" style="left:158px;top:503px;width:637px;height:65px;background:#fff;"></div>
<div class="a" style="left:159px;top:503px;width:636px;height:64px;background:#696969;"></div>
<div class="a" style="left:160px;top:504px;width:635px;height:63px;background:#fff;"></div>
<div class="a" style="left:161px;top:505px;width:633px;height:61px;background:#f0f0f0;"></div>
<div class="a" style="left:165px;top:508px;width:585px;height:12px;background:#d9d9d9;"></div>
<div class="t" style="left:132px;width:40px;text-align:right;top:508px;font-size:11.5px;color:#222">1</div>
<div class="t" style="left:168px;width:40px;text-align:right;top:508px;font-size:11.5px;color:#222">5</div>
<div class="t" style="left:213px;width:40px;text-align:right;top:508px;font-size:11.5px;color:#222">10</div>
<div class="t" style="left:258px;width:40px;text-align:right;top:508px;font-size:11.5px;color:#222">15</div>
<div class="t" style="left:303px;width:40px;text-align:right;top:508px;font-size:11.5px;color:#222">20</div>
<div class="t" style="left:348px;width:40px;text-align:right;top:508px;font-size:11.5px;color:#222">25</div>
<div class="t" style="left:393px;width:40px;text-align:right;top:508px;font-size:11.5px;color:#222">30</div>
<div class="t" style="left:438px;width:40px;text-align:right;top:508px;font-size:11.5px;color:#222">35</div>
<div class="t" style="left:483px;width:40px;text-align:right;top:508px;font-size:11.5px;color:#222">40</div>
<div class="t" style="left:528px;width:40px;text-align:right;top:508px;font-size:11.5px;color:#222">45</div>
<div class="t" style="left:573px;width:40px;text-align:right;top:508px;font-size:11.5px;color:#222">50</div>
<div class="t" style="left:618px;width:40px;text-align:right;top:508px;font-size:11.5px;color:#222">55</div>
<div class="t" style="left:663px;width:40px;text-align:right;top:508px;font-size:11.5px;color:#222">60</div>
<div class="t" style="left:708px;width:40px;text-align:right;top:508px;font-size:11.5px;color:#222">65</div>
<div class="mono" style="left:167px;top:523px;line-height:15px">@GSR<span class="rn">\r \n</span></div>
<div class="a" style="left:776px;top:505px;width:1px;height:61px;background:#fff;"></div>
<svg class="a" style="left:780px;top:510px" width="9" height="8" viewBox="0 0 9 8"><path d="M1 6.5L4.5 2.5L8 6.5" stroke="#555" stroke-width="2" fill="none"/></svg>
<div class="a" style="left:777px;top:521px;width:15px;height:19px;background:#cdcdcd;"></div>
<svg class="a" style="left:780px;top:554px" width="9" height="8" viewBox="0 0 9 8"><path d="M1 1.5L4.5 5.5L8 1.5" stroke="#555" stroke-width="2" fill="none"/></svg>
<div class="a" style="left:792px;top:582px;width:2px;height:2px;background:#a0a0a0;"></div>
<div class="a" style="left:789px;top:585px;width:2px;height:2px;background:#a0a0a0;"></div>
<div class="a" style="left:792px;top:585px;width:2px;height:2px;background:#a0a0a0;"></div>
<div class="a" style="left:786px;top:588px;width:2px;height:2px;background:#a0a0a0;"></div>
<div class="a" style="left:789px;top:588px;width:2px;height:2px;background:#a0a0a0;"></div>
<div class="a" style="left:792px;top:588px;width:2px;height:2px;background:#a0a0a0;"></div>
<div class="a" style="left:796px;top:52px;width:1px;height:540px;background:#505050;"></div>
<div class="a" style="left:795px;top:160px;width:1px;height:410px;background:#888;"></div>
<div class="a" style="left:257px;top:571px;width:1px;height:20px;background:#d7d7d7;"></div>
<div class="t" style="left:262px;top:576px;letter-spacing:0.15px">History -/1/10</div>
<div class="a" style="left:387px;top:571px;width:1px;height:20px;background:#d7d7d7;"></div>
<div class="t" style="left:392px;top:576px;letter-spacing:-0.2px">Connected to COM14 (b:115200 d:8 s:1 p:None)</div>
</body></html>
